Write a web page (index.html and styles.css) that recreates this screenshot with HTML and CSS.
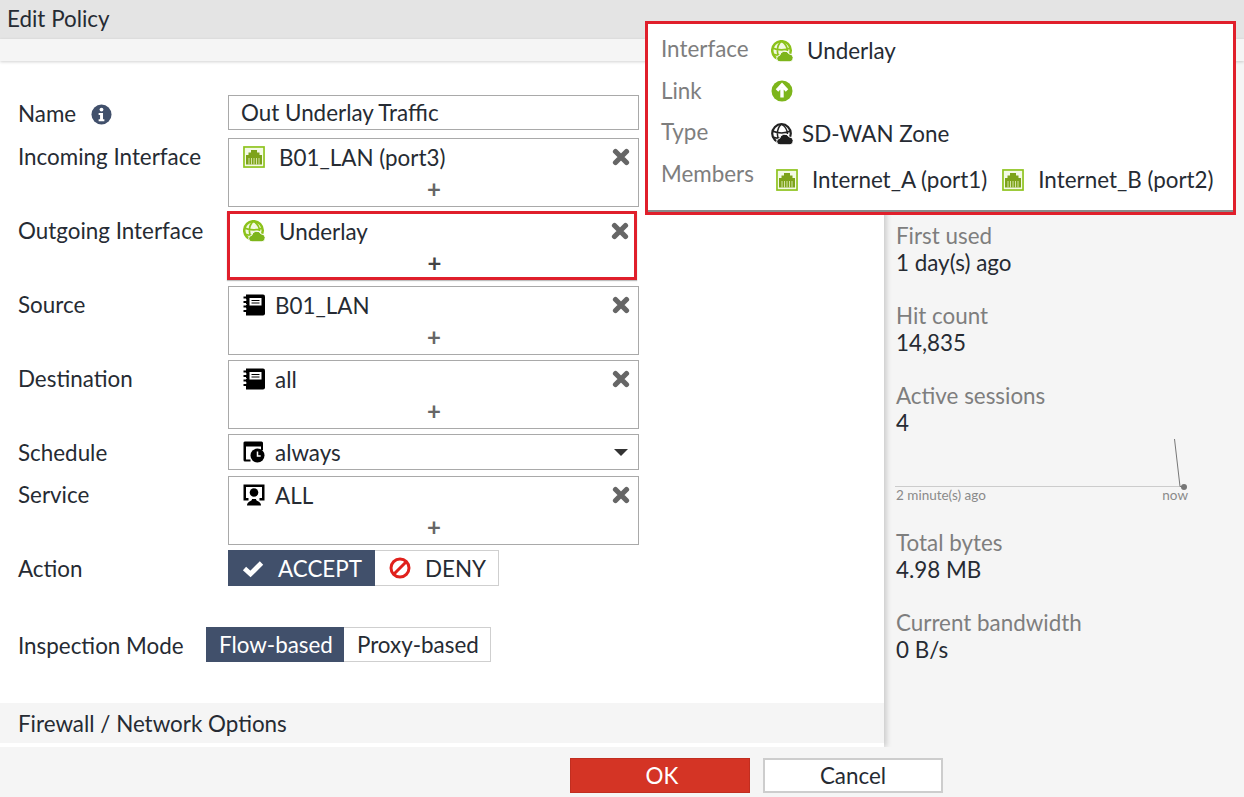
FILE: index.html
```html
<!DOCTYPE html>
<html lang="en">
<head>
<meta charset="utf-8">
<title>Edit Policy</title>
<link rel="stylesheet" href="styles.css">
</head>
<body>
<svg class="defs" width="0" height="0" aria-hidden="true">
  <defs>
    <symbol id="port" viewBox="0 0 22 22">
      <rect x="0" y="0" width="22" height="22" fill="#dff0bd"/>
      <rect x="1" y="1" width="20" height="20" fill="#f4fae6" stroke="#8cc21b" stroke-width="1.600"/>
      <path d="M8 4h6v2.500h2.500V9H19v9.500H3V9h2.500V6.500H8z" fill="#7da31a"/>
      <path d="M6 12v6.500M8.500 12v6.500M11 12v6.500M13.500 12v6.500M16 12v6.500" stroke="#dcebb5" stroke-width="0.900"/>
    </symbol>
    <symbol id="zone-green" viewBox="0 0 22 22">
      <circle cx="10.500" cy="10.500" r="9.300" fill="#f2f9e2" stroke="#8cc21b" stroke-width="2.500"/>
      <path d="M1.500 8c5 2.500 13 2.500 18 0M2 14c3 1.500 5 1.500 7.500 1M10.500 1c-5.500 5-5.500 14 0 19M10.500 1c3.500 2.500 6 6 6 10" fill="none" stroke="#8cc21b" stroke-width="1.700"/>
      <path d="M9 21.800a3.200 3.200 0 0 1-.3-6.400 5 5 0 0 1 9.400-1.500 4 4 0 0 1 1 7.900z" fill="#7db51b" stroke="#fff" stroke-width="1"/>
    </symbol>
    <symbol id="zone-black" viewBox="0 0 22 22">
      <circle cx="10.500" cy="10.500" r="9.300" fill="#fff" stroke="#222" stroke-width="2.200"/>
      <path d="M1.500 8c5 2.500 13 2.500 18 0M2 14c3 1.500 5 1.500 7.500 1M10.500 1c-5.500 5-5.500 14 0 19M10.500 1c3.500 2.500 6 6 6 10" fill="none" stroke="#222" stroke-width="1.500"/>
      <path d="M9 21.800a3.200 3.200 0 0 1-.3-6.400 5 5 0 0 1 9.400-1.500 4 4 0 0 1 1 7.900z" fill="#1d1d1d" stroke="#fff" stroke-width="1"/>
    </symbol>
    <symbol id="book" viewBox="0 0 22 22">
      <path d="M3 0.500h17a2 2 0 0 1 2 2v17a2 2 0 0 1-2 2H3z" fill="#000"/>
      <path d="M6.500 4h12v7.500h-12z" fill="#fff"/>
      <path d="M8.500 6.500h8M8.500 9h8" stroke="#000" stroke-width="1.100"/>
      <path d="M0.500 3.500h4M0.500 8h4M0.500 12.500h4M0.500 17h4" stroke="#000" stroke-width="1.800"/>
      <path d="M3 5.500v1M3 10v1M3 14.500v1" stroke="#fff" stroke-width="1.200"/>
    </symbol>
    <symbol id="clock" viewBox="0 0 22 22">
      <path d="M2.500 0.500h16a1.500 1.500 0 0 1 1.500 1.500v7h-2V5.500H3v13h4.500v2H2A1.500 1.500 0 0 1 .5 19V2A1.500 1.500 0 0 1 2.500 .5z" fill="#000"/>
      <circle cx="14.500" cy="14.500" r="7" fill="#000"/>
      <path d="M14.500 10.500v4.500h3.200" fill="none" stroke="#fff" stroke-width="1.500"/>
    </symbol>
    <symbol id="service" viewBox="0 0 22 22">
      <path d="M.5 .5h21v16h-5v-2.500h2.500V3H3v11h2.500v2.500h-5z" fill="#000"/>
      <circle cx="11" cy="8.500" r="4.300" fill="#000"/>
      <path d="M4 21.500c0-1 .4-3 2.500-4 1.500-.8 2.500-1 2.500-2.500h4c0 1.500 1 1.700 2.500 2.500 2.100 1 2.500 3 2.500 4z" fill="#000"/>
    </symbol>
    <symbol id="remove" viewBox="0 0 18 18">
      <path d="M3.500 3.500l11 11M14.500 3.500l-11 11" stroke="#666" stroke-width="5.200" stroke-linecap="round"/>
    </symbol>
  </defs>
</svg>

<div class="page">
  <header class="titlebar">Edit Policy</header>
  <div class="strip"></div>

  <div class="body">
    <main class="form">
      <div class="fields">
        <div class="row row-name">
          <label class="label">Name<svg class="info" viewBox="0 0 22 22" width="21" height="21"><circle cx="11" cy="11" r="10.500" fill="#41506b"/><circle cx="11" cy="5.800" r="2" fill="#fff"/><path d="M8 9.500h4.600v6.500h1.400v2H8v-2h1.500v-4.500H8z" fill="#fff"/></svg></label>
          <div class="field field-input">Out Underlay Traffic</div>
        </div>

        <div class="row row-multi">
          <label class="label">Incoming Interface</label>
          <div class="field field-multi">
            <div class="entry">
              <svg class="icon icon-wide"><use href="#port"/></svg>
              <span class="entry-text">B01_LAN (port3)</span>
              <svg class="remove"><use href="#remove"/></svg>
            </div>
            <div class="plus">+</div>
          </div>
        </div>

        <div class="row row-multi">
          <label class="label">Outgoing Interface</label>
          <div class="field field-multi field-highlight">
            <div class="entry">
              <svg class="icon icon-wide"><use href="#zone-green"/></svg>
              <span class="entry-text">Underlay</span>
              <svg class="remove"><use href="#remove"/></svg>
            </div>
            <div class="plus plus-dark">+</div>
          </div>
        </div>

        <div class="row row-multi">
          <label class="label">Source</label>
          <div class="field field-multi">
            <div class="entry">
              <svg class="icon"><use href="#book"/></svg>
              <span class="entry-text">B01_LAN</span>
              <svg class="remove"><use href="#remove"/></svg>
            </div>
            <div class="plus">+</div>
          </div>
        </div>

        <div class="row row-multi">
          <label class="label">Destination</label>
          <div class="field field-multi">
            <div class="entry">
              <svg class="icon"><use href="#book"/></svg>
              <span class="entry-text">all</span>
              <svg class="remove"><use href="#remove"/></svg>
            </div>
            <div class="plus">+</div>
          </div>
        </div>

        <div class="row row-select">
          <label class="label">Schedule</label>
          <div class="field field-select">
            <svg class="icon"><use href="#clock"/></svg>
            <span class="entry-text">always</span>
            <span class="caret"></span>
          </div>
        </div>

        <div class="row row-multi">
          <label class="label">Service</label>
          <div class="field field-multi">
            <div class="entry">
              <svg class="icon"><use href="#service"/></svg>
              <span class="entry-text">ALL</span>
              <svg class="remove"><use href="#remove"/></svg>
            </div>
            <div class="plus">+</div>
          </div>
        </div>

        <div class="row row-action">
          <label class="label">Action</label>
          <div class="toggle">
            <span class="opt opt-on opt-accept"><svg class="opt-icon" viewBox="0 0 22 22" width="22" height="22"><path d="M2.500 11.500l6 5.500L19.500 6" fill="none" stroke="#fff" stroke-width="4.800"/></svg>ACCEPT</span>
            <span class="opt opt-deny"><svg class="opt-icon" viewBox="0 0 22 22" width="22" height="22"><circle cx="11" cy="11" r="9" fill="none" stroke="#e0211c" stroke-width="3"/><path d="M5 17L17 5" stroke="#e0211c" stroke-width="3"/></svg>DENY</span>
          </div>
        </div>

        <div class="row row-mode">
          <label class="label label-mode">Inspection Mode</label>
          <div class="toggle">
            <span class="opt opt-on opt-text">Flow-based</span>
            <span class="opt opt-text">Proxy-based</span>
          </div>
        </div>
      </div>

      <h2 class="section">Firewall / Network Options</h2>
    </main>

    <aside class="stats">
      <div class="stat"><div class="stat-label">First used</div><div class="stat-value">1 day(s) ago</div></div>
      <div class="stat"><div class="stat-label">Hit count</div><div class="stat-value">14,835</div></div>
      <div class="stat stat-chart">
        <div class="stat-label">Active sessions</div>
        <div class="stat-value">4</div>
        <svg class="chart" width="294" height="52" viewBox="0 0 294 52">
          <path d="M0 48.500H289" stroke="#ccc" stroke-width="1"/>
          <path d="M279.500 1l5.500 47.500h4" fill="none" stroke="#777" stroke-width="1"/>
          <circle cx="289" cy="49" r="3" fill="#777"/>
        </svg>
        <div class="chart-axis"><span>2 minute(s) ago</span><span>now</span></div>
      </div>
      <div class="stat"><div class="stat-label">Total bytes</div><div class="stat-value">4.98 MB</div></div>
      <div class="stat"><div class="stat-label">Current bandwidth</div><div class="stat-value">0 B/s</div></div>
    </aside>
  </div>

  <footer class="footer">
    <button class="btn btn-ok" type="button">OK</button>
    <button class="btn btn-cancel" type="button">Cancel</button>
  </footer>

  <div class="tooltip">
    <div class="tip-row">
      <span class="tip-label">Interface</span>
      <span class="tip-value tip-value-low"><svg class="icon icon-wide"><use href="#zone-green"/></svg>Underlay</span>
    </div>
    <div class="tip-row">
      <span class="tip-label">Link</span>
      <span class="tip-value"><svg class="icon" viewBox="0 0 22 22"><circle cx="11" cy="11" r="10.500" fill="#7db51b"/><path d="M11 17.500V8M6 10.500l5-5.500 5 5.500" fill="none" stroke="#fff" stroke-width="3.400"/></svg></span>
    </div>
    <div class="tip-row">
      <span class="tip-label">Type</span>
      <span class="tip-value tip-value-low"><svg class="icon icon-tight"><use href="#zone-black"/></svg>SD-WAN Zone</span>
    </div>
    <div class="tip-row tip-row-members">
      <span class="tip-label">Members</span>
      <span class="tip-value tip-members">
        <span class="member"><svg class="icon icon-wide"><use href="#port"/></svg>Internet_A (port1)</span>
        <span class="member"><svg class="icon icon-wide"><use href="#port"/></svg>Internet_B (port2)</span>
      </span>
    </div>
  </div>
</div>
</body>
</html>
```

FILE: styles.css
```css
* { box-sizing: border-box; }

html, body {
  margin: 0;
  padding: 0;
  height: 100%;
  overflow: hidden;
}

body {
  font-family: Lato, "Open Sans", sans-serif;
  font-size: 22.400px;
  color: #262b33;
  background: #f5f5f5;
}

.defs { position: absolute; }

.page {
  position: relative;
  display: flex;
  flex-direction: column;
  width: 1244px;
  height: 797px;
  overflow: hidden;
}

.titlebar {
  height: 39px;
  padding: 0 7px;
  line-height: 37px;
  background: #e4e4e4;
}

.strip {
  height: 22px;
  background: #f5f5f5;
  box-shadow: 0 1px 3px rgba(0, 0, 0, 0.18);
  position: relative;
  z-index: 1;
}

.body {
  display: flex;
  height: 686px;
  flex: none;
}

.form {
  width: 884px;
  background: #fff;
  box-shadow: 2px 0 6px rgba(0, 0, 0, 0.2);
  position: relative;
  display: flex;
  flex-direction: column;
  justify-content: space-between;
  padding-bottom: 4px;
}

.fields {
  display: flex;
  flex-direction: column;
  padding: 34px 0 0 18px;
}

.row {
  display: flex;
  align-items: flex-start;
}

.label {
  width: 210px;
  flex: none;
  line-height: 38px;
  display: flex;
  align-items: center;
}

.label-mode { width: 188px; }

.info { margin-left: 15px; }

.field {
  width: 411px;
  border: 1px solid #a9a9a9;
  background: #fff;
}

.row-name { height: 43px; }
.row-multi { height: 74px; }
.row-select { height: 42px; }
.row-action { height: 77px; }
.row-mode { height: 76px; }

.field-input {
  height: 35px;
  padding-left: 12px;
  line-height: 34px;
}

.field-multi {
  height: 69px;
  padding: 2px 8px 0 14px;
}

.field-highlight {
  width: 410px;
  margin: -1px 0 0 -1px;
  border: 3px solid #e01f2b;
  padding: 1px 5px 0 13px;
  box-shadow: 0 1px 1px rgba(0, 0, 0, 0.25);
}

.entry {
  display: flex;
  align-items: center;
  height: 32px;
}

.icon {
  width: 22px;
  height: 22px;
  flex: none;
  margin-right: 10px;
}

.icon-wide { margin-right: 14px; }
.icon-tight { margin-right: 9px; }

.entry-text { flex: 1; }

.remove {
  width: 18px;
  height: 18px;
  flex: none;
}

.plus {
  text-align: center;
  font-size: 24px;
  font-weight: 700;
  line-height: 26px;
  color: #666;
  margin: 3px 5px 0 0;
}

.plus-dark { color: #444; margin-right: 3px; }

.field-select {
  height: 36px;
  display: flex;
  align-items: center;
  padding: 0 10px 0 14px;
}

.caret {
  width: 0;
  height: 0;
  border-left: 7px solid transparent;
  border-right: 7px solid transparent;
  border-top: 7px solid #333;
}

.toggle { display: flex; }

.opt {
  display: flex;
  align-items: center;
  height: 36px;
  border: 1px solid #cfcfcf;
  border-left: 0;
  background: #fff;
  padding: 0 12px 0 14px;
}

.opt-on {
  background: #41506b;
  border: 0;
  color: #fff;
}

.opt-accept { padding-right: 13px; }

.opt-icon { margin-right: 14px; flex: none; }

.opt-text {
  height: 35px;
  padding: 0 11px 0 13px;
}

.section {
  margin: 0;
  height: 40px;
  padding: 0 18px;
  line-height: 42px;
  font-size: inherit;
  font-weight: 400;
  background: #f5f5f5;
}

.stats {
  flex: 1;
  padding: 161px 0 0 12px;
  background: #f5f5f5;
}

.stat { height: 80px; line-height: 27px; }

.stat-label { color: #7e7e7e; }

.stat-chart { height: 147px; }

.chart {
  display: block;
  margin: 2px 0 0 -1px;
}

.chart-axis {
  display: flex;
  justify-content: space-between;
  width: 292px;
  margin-top: -3px;
  font-size: 13.500px;
  line-height: 16px;
  color: #8a8a8a;
}

.footer {
  flex: 1;
  display: flex;
  align-items: flex-end;
  gap: 13px;
  padding: 0 0 4px 570px;
  background: #f5f5f5;
  position: relative;
  z-index: 1;
}

.btn {
  width: 180px;
  height: 35px;
  font: inherit;
  padding: 0;
}

.btn-ok {
  color: #fff;
  background: #d43425;
  border: 1px solid #c12e20;
  padding-left: 4px;
}

.btn-cancel {
  color: #262b33;
  background: #fff;
  border: 2px solid #cdcdcd;
}

.tooltip {
  position: absolute;
  left: 645px;
  top: 21px;
  width: 591px;
  height: 194px;
  background: #fff;
  border: 3px solid #e01f2b;
  padding: 7px 0 0 13px;
  z-index: 3;
}

.tooltip::after {
  content: "";
  position: absolute;
  left: 0;
  right: 0;
  bottom: 0;
  height: 2px;
  background: #8a8a8a;
}

.tip-row {
  display: flex;
  height: 41.500px;
  line-height: 36px;
}

.tip-label {
  width: 110px;
  flex: none;
  color: #7e7e7e;
}

.tip-value {
  display: flex;
  align-items: center;
  height: 36px;
}

.tip-value-low { position: relative; top: 2px; }

.tip-members {
  padding-left: 5px;
  gap: 15px;
  position: relative;
  top: 6px;
}

.member { display: flex; align-items: center; }
```
